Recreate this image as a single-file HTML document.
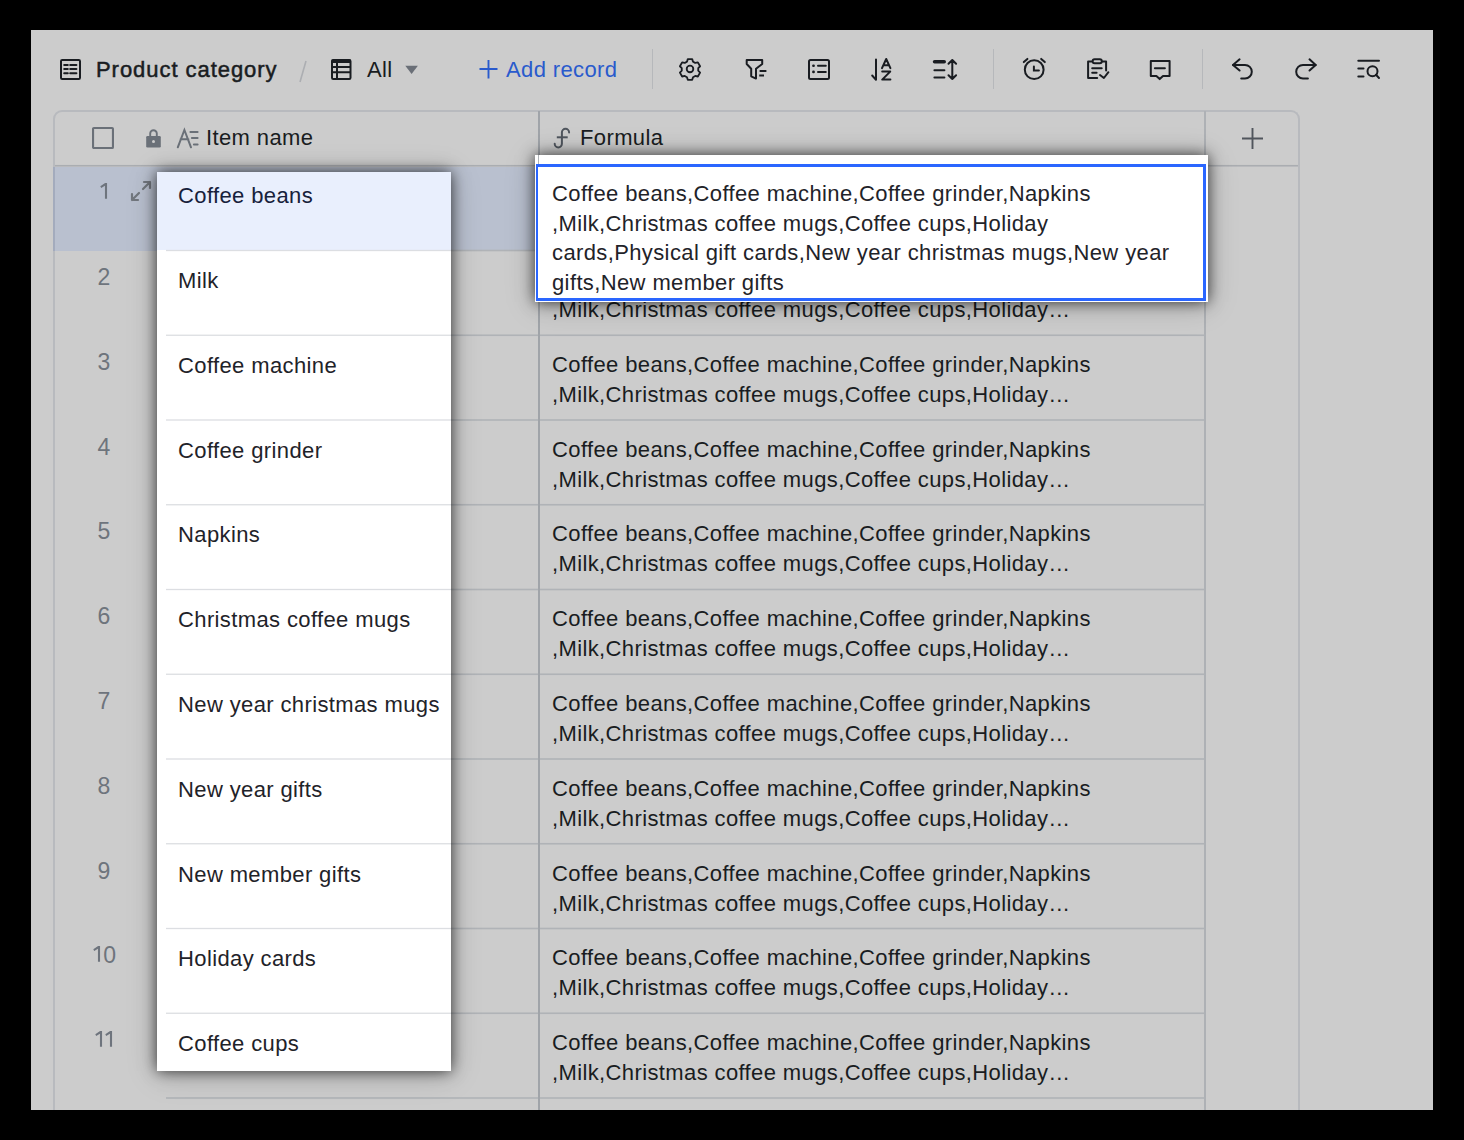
<!DOCTYPE html><html><head><meta charset="utf-8"><style>
*{margin:0;padding:0;box-sizing:border-box}
html,body{width:1464px;height:1140px;background:#000;overflow:hidden}
body{position:relative;font-family:"Liberation Sans",sans-serif;color:#191c21}
.abs{position:absolute}
#panel{position:absolute;left:31px;top:30px;width:1402px;height:1080px;background:#cccccc;overflow:hidden}
.t{position:absolute;white-space:nowrap;font-size:22px;letter-spacing:0.38px;line-height:30px}
.sep{position:absolute;top:49px;width:1px;height:40px;background:#b6b8bb}
.hl{position:absolute;height:2px;background:#babcc0}
.vl{position:absolute;width:1px;background:#aeb0b4}
.num{position:absolute;font-size:23px;color:#6e747c;line-height:30px;width:40px;text-align:center}
svg{position:absolute;overflow:visible}
</style></head><body>
<div id="panel"></div>
<svg style="left:60px;top:59px" width="21" height="21" viewBox="0 0 21 21" fill="none" stroke="#191c21" stroke-width="2"><rect x="1" y="1" width="19" height="19" rx="1.2"/><path d="M4.2 6h3.6M10.2 6h6.2M4.2 10.1h3.6M10.2 10.1h6.2M4.2 14.3h3.6M10.2 14.3h6.2" stroke-width="2" stroke-linecap="round"/></svg>
<div class="t" style="left:96px;top:55px;-webkit-text-stroke:0.5px #191c21;letter-spacing:0.95px">Product category</div>
<svg style="left:299px;top:60px" width="8" height="23" viewBox="0 0 8 23"><path d="M7 1L1 22" stroke="#acaeb2" stroke-width="1.6"/></svg>
<svg style="left:331px;top:59px" width="21" height="21" viewBox="0 0 21 21" fill="none" stroke="#191c21" stroke-width="2"><rect x="1" y="1" width="18.5" height="19" rx="1.2"/><rect x="0.5" y="0.5" width="19.5" height="3.6" rx="1" fill="#191c21" stroke="none"/><path d="M1 8h18.5M1 13.2h18.5M6 3v17"/></svg>
<div class="t" style="left:367px;top:55px">All</div>
<svg style="left:405px;top:65px" width="14" height="10" viewBox="0 0 14 10"><path d="M0.3 0.7h12.6L6.6 8.9z" fill="#6a6f77"/></svg>
<svg style="left:479px;top:59px" width="20" height="20" viewBox="0 0 20 20" stroke="#295acc" stroke-width="1.9"><path d="M9.5 1v18.5M0.5 10h18"/></svg>
<div class="t" style="left:506px;top:55px;color:#295acc">Add record</div>
<div class="sep" style="left:652px"></div>
<div class="sep" style="left:993px"></div>
<div class="sep" style="left:1202px"></div>
<svg style="left:679px;top:58px" width="22" height="22" viewBox="0 0 24 24" fill="none" stroke="#191c21" stroke-width="2" stroke-linejoin="round"><path d="M9.6 2.2h4.8l.9 2.8 2.4 1.4 2.9-.6 2.4 4.2-2 2.1v2.8l2 2.1-2.4 4.2-2.9-.6-2.4 1.4-.9 2.8H9.6l-.9-2.8-2.4-1.4-2.9.6-2.4-4.2 2-2.1v-2.8l-2-2.1 2.4-4.2 2.9.6 2.4-1.4z" transform="translate(0,-1)"/><circle cx="12" cy="11.9" r="3.6"/></svg>
<svg style="left:745px;top:59px" width="22" height="21" viewBox="0 0 22 21" fill="none" stroke="#191c21" stroke-width="2" stroke-linejoin="round"><path d="M1.7 1H17.2V5L11 9.8V19.6L6.2 17.3V9.8L1.7 5Z"/><path d="M14.6 12h6.8M14.2 16.5h4.8"/></svg>
<svg style="left:808px;top:59px" width="22" height="21" viewBox="0 0 22 21" fill="none" stroke="#191c21" stroke-width="2" stroke-linecap="round"><rect x="1" y="1" width="20" height="19" rx="1.5"/><path d="M5.4 6.8h0.2M5.4 12.9h0.2" stroke-width="2.6"/><path d="M10 6.8h7.8M10 12.9h7.8"/></svg>
<svg style="left:870px;top:58px" width="24" height="23" viewBox="0 0 24 23" fill="none" stroke="#191c21" stroke-width="2" stroke-linejoin="round" stroke-linecap="round"><path d="M6 1.6v20.2L2.2 17.5"/><path d="M12 10.2l4.2-9.2 4.2 9.2M13.3 7.3h5.8"/><path d="M12.2 13.6h8l-8 8h8.2"/></svg>
<svg style="left:933px;top:58px" width="25" height="23" viewBox="0 0 25 23" fill="none" stroke="#191c21" stroke-width="2" stroke-linecap="round"><path d="M1.6 3.8h9.6" stroke-width="3.6"/><path d="M1.4 12.2h10M1.4 19.5h10"/><path d="M19.3 2v19M15.5 5.8l3.8-3.8 3.8 3.8M15.5 17.2l3.8 3.8 3.8-3.8" stroke-linejoin="round"/></svg>
<svg style="left:1023px;top:57px" width="23" height="24" viewBox="0 0 23 24" fill="none" stroke="#191c21" stroke-width="2" stroke-linecap="round"><circle cx="11.2" cy="12.7" r="9.4"/><path d="M10.9 9.6v3.9h5"/><path d="M0.8 5.1l3.6-3.2M21.8 5.1l-3.6-3.2"/></svg>
<svg style="left:1086px;top:57px" width="24" height="23" viewBox="0 0 24 23" fill="none" stroke="#191c21" stroke-width="2" stroke-linejoin="round" stroke-linecap="round"><path d="M5.5 4.4H2.1V20.9h9.1M16.5 4.4h3.6v9.1"/><rect x="6.6" y="2.2" width="9.2" height="4" rx="2"/><path d="M6.2 11.2h9.5M6.2 15.7h4.4M14 18l3.9 3 4.5-5.8"/></svg>
<svg style="left:1149px;top:59px" width="22" height="22" viewBox="0 0 22 22" fill="none" stroke="#191c21" stroke-width="2" stroke-linejoin="round"><path d="M1.8 2h18.8v15H14l-3.3 3.1-3.3-3.1H1.8z"/><path d="M5.9 9.2h10" stroke-linecap="round"/></svg>
<svg style="left:1232px;top:58px" width="22" height="23" viewBox="0 0 22 23" fill="none" stroke="#191c21" stroke-width="2" stroke-linecap="round" stroke-linejoin="round"><path d="M7.6 1.3L1 6.9l6.6 5.6"/><path d="M1 6.9h12a6.8 6.8 0 0 1 0 13.6H9.2"/></svg>
<svg style="left:1295px;top:58px" width="22" height="23" viewBox="0 0 22 23" fill="none" stroke="#191c21" stroke-width="2" stroke-linecap="round" stroke-linejoin="round"><path d="M14.5 1.3l6.2 5.6-6.2 5.6"/><path d="M20.7 6.9H8a6.8 6.8 0 0 0 0 13.6h4.9"/></svg>
<svg style="left:1357px;top:58px" width="24" height="23" viewBox="0 0 24 23" fill="none" stroke="#191c21" stroke-width="2" stroke-linecap="round"><path d="M1.3 2.7H22M1.3 10.6h5.2M1.3 18.4h5.2"/><circle cx="15.5" cy="13.2" r="5"/><path d="M19 16.8l3 3.2"/></svg>
<div class="abs" style="left:53px;top:110px;width:1247px;height:1000px;border:2px solid #b8babe;border-bottom:none;border-radius:9px 9px 0 0"></div>
<div class="abs" style="left:53px;top:167px;width:1151px;height:84px;background:#b9c0cf"></div>
<div class="abs" style="left:53px;top:167px;width:2px;height:84px;background:#a3abbd"></div>
<svg style="left:0;top:0" width="1464" height="1110" viewBox="0 0 1464 1110"><rect x="55" y="164.95" width="1243" height="1.6" fill="#aaadb1"/><rect x="166" y="249.70" width="1039" height="1.6" fill="#b0b3b7"/><rect x="166" y="334.45" width="1039" height="1.6" fill="#b0b3b7"/><rect x="166" y="419.20" width="1039" height="1.6" fill="#b0b3b7"/><rect x="166" y="503.95" width="1039" height="1.6" fill="#b0b3b7"/><rect x="166" y="588.70" width="1039" height="1.6" fill="#b0b3b7"/><rect x="166" y="673.45" width="1039" height="1.6" fill="#b0b3b7"/><rect x="166" y="758.20" width="1039" height="1.6" fill="#b0b3b7"/><rect x="166" y="842.95" width="1039" height="1.6" fill="#b0b3b7"/><rect x="166" y="927.70" width="1039" height="1.6" fill="#b0b3b7"/><rect x="166" y="1012.45" width="1039" height="1.6" fill="#b0b3b7"/><rect x="166" y="1097.20" width="1039" height="1.6" fill="#b0b3b7"/></svg>
<div class="vl" style="left:538px;top:111px;height:999px;width:2px;background:#a0a4a9"></div>
<div class="vl" style="left:1204px;top:111px;height:999px;width:2px;background:#aeb1b5"></div>
<svg style="left:92px;top:127px" width="22" height="22" viewBox="0 0 22 22" fill="none" stroke="#6a7078" stroke-width="2.1"><rect x="1.05" y="1.05" width="19.9" height="19.9" rx="0.8"/></svg>
<svg style="left:146px;top:129px" width="15" height="19" viewBox="0 0 15 19"><path d="M4.2 8V4.6a3.3 3.3 0 0 1 6.6 0V8" fill="none" stroke="#6a7078" stroke-width="1.9"/><rect x="0.2" y="7" width="14.6" height="11.5" rx="1.3" fill="#6a7078"/><circle cx="7.5" cy="12.5" r="1.5" fill="#cccccc"/></svg>
<svg style="left:177px;top:129px" width="22" height="20" viewBox="0 0 22 20" fill="none" stroke="#6a7078" stroke-width="2" stroke-linecap="round"><path d="M0.8 18.3L7.4 1 14 18.3M3.6 10.2h7.8"/><path d="M13.4 2.9h7.2M14.9 9h5.7M16.9 15.4h3.7"/></svg>
<div class="t" style="left:206px;top:123px">Item name</div>
<svg style="left:553px;top:128px" width="18" height="21" viewBox="0 0 18 21" fill="none" stroke="#50565e" stroke-width="2" stroke-linecap="round"><path d="M16.1 4.4A3.6 3.6 0 0 0 8.9 4.4V15.8A3.6 3.6 0 0 1 1.7 15.8"/><path d="M3.8 9.3H14.7" stroke-linecap="butt"/></svg>
<div class="t" style="left:580px;top:123px">Formula</div>
<svg style="left:1242px;top:128px" width="21" height="21" viewBox="0 0 21 21" stroke="#50555c" stroke-width="1.9"><path d="M10.5 0v21M0 10.5h21"/></svg>
<svg style="left:100.1px;top:183px" width="8" height="17" viewBox="-6 0 8 17"><polygon points="1.05,0 -0.9,0 -5.7,3.3 -4.8,5.1 -1.05,2.7 -1.05,15.8 1.05,15.8" fill="#6e747d"/></svg>
<div class="num" style="left:84px;top:262px">2</div>
<div class="num" style="left:84px;top:347px">3</div>
<div class="num" style="left:84px;top:432px">4</div>
<div class="num" style="left:84px;top:516px">5</div>
<div class="num" style="left:84px;top:601px">6</div>
<div class="num" style="left:84px;top:686px">7</div>
<div class="num" style="left:84px;top:771px">8</div>
<div class="num" style="left:84px;top:856px">9</div>
<svg style="left:93.1px;top:946px" width="8" height="17" viewBox="-6 0 8 17"><polygon points="1.05,0 -0.9,0 -5.7,3.3 -4.8,5.1 -1.05,2.7 -1.05,15.8 1.05,15.8" fill="#6e747d"/></svg>
<div class="num" style="left:103.2px;top:940px;width:auto;text-align:left">0</div>
<svg style="left:95.2px;top:1031px" width="8" height="17" viewBox="-6 0 8 17"><polygon points="1.05,0 -0.9,0 -5.7,3.3 -4.8,5.1 -1.05,2.7 -1.05,15.8 1.05,15.8" fill="#6e747d"/></svg>
<svg style="left:105px;top:1031px" width="8" height="17" viewBox="-6 0 8 17"><polygon points="1.05,0 -0.9,0 -5.7,3.3 -4.8,5.1 -1.05,2.7 -1.05,15.8 1.05,15.8" fill="#6e747d"/></svg>
<svg style="left:130px;top:180px" width="22" height="22" viewBox="0 0 22 22" fill="none" stroke="#72777e" stroke-width="2.2" stroke-linecap="round" stroke-linejoin="round"><path d="M13 9L20 2M14 2h6v6M9 13l-7 7M2 14v6h6"/></svg>
<div class="t" style="left:552px;top:265px">Coffee beans,Coffee machine,Coffee grinder,Napkins<br>,Milk,Christmas coffee mugs,Coffee cups,Holiday<span style="letter-spacing:0.75px;margin-left:1px">...</span></div>
<div class="t" style="left:552px;top:350px">Coffee beans,Coffee machine,Coffee grinder,Napkins<br>,Milk,Christmas coffee mugs,Coffee cups,Holiday<span style="letter-spacing:0.75px;margin-left:1px">...</span></div>
<div class="t" style="left:552px;top:435px">Coffee beans,Coffee machine,Coffee grinder,Napkins<br>,Milk,Christmas coffee mugs,Coffee cups,Holiday<span style="letter-spacing:0.75px;margin-left:1px">...</span></div>
<div class="t" style="left:552px;top:519px">Coffee beans,Coffee machine,Coffee grinder,Napkins<br>,Milk,Christmas coffee mugs,Coffee cups,Holiday<span style="letter-spacing:0.75px;margin-left:1px">...</span></div>
<div class="t" style="left:552px;top:604px">Coffee beans,Coffee machine,Coffee grinder,Napkins<br>,Milk,Christmas coffee mugs,Coffee cups,Holiday<span style="letter-spacing:0.75px;margin-left:1px">...</span></div>
<div class="t" style="left:552px;top:689px">Coffee beans,Coffee machine,Coffee grinder,Napkins<br>,Milk,Christmas coffee mugs,Coffee cups,Holiday<span style="letter-spacing:0.75px;margin-left:1px">...</span></div>
<div class="t" style="left:552px;top:774px">Coffee beans,Coffee machine,Coffee grinder,Napkins<br>,Milk,Christmas coffee mugs,Coffee cups,Holiday<span style="letter-spacing:0.75px;margin-left:1px">...</span></div>
<div class="t" style="left:552px;top:859px">Coffee beans,Coffee machine,Coffee grinder,Napkins<br>,Milk,Christmas coffee mugs,Coffee cups,Holiday<span style="letter-spacing:0.75px;margin-left:1px">...</span></div>
<div class="t" style="left:552px;top:943px">Coffee beans,Coffee machine,Coffee grinder,Napkins<br>,Milk,Christmas coffee mugs,Coffee cups,Holiday<span style="letter-spacing:0.75px;margin-left:1px">...</span></div>
<div class="t" style="left:552px;top:1028px">Coffee beans,Coffee machine,Coffee grinder,Napkins<br>,Milk,Christmas coffee mugs,Coffee cups,Holiday<span style="letter-spacing:0.75px;margin-left:1px">...</span></div>
<div class="abs" style="left:157px;top:172px;width:294px;height:899px;background:#fff;box-shadow:0 0 14px rgba(0,0,0,0.72),0 3px 30px rgba(0,0,0,0.18)"></div>
<div class="abs" style="left:157px;top:172px;width:294px;height:78px;background:#e9effd"></div>
<svg style="left:0;top:0" width="1464" height="1110" viewBox="0 0 1464 1110"><rect x="166" y="249.85" width="285" height="1.3" fill="#dcdee2"/><rect x="166" y="334.60" width="285" height="1.3" fill="#dcdee2"/><rect x="166" y="419.35" width="285" height="1.3" fill="#dcdee2"/><rect x="166" y="504.10" width="285" height="1.3" fill="#dcdee2"/><rect x="166" y="588.85" width="285" height="1.3" fill="#dcdee2"/><rect x="166" y="673.60" width="285" height="1.3" fill="#dcdee2"/><rect x="166" y="758.35" width="285" height="1.3" fill="#dcdee2"/><rect x="166" y="843.10" width="285" height="1.3" fill="#dcdee2"/><rect x="166" y="927.85" width="285" height="1.3" fill="#dcdee2"/><rect x="166" y="1012.60" width="285" height="1.3" fill="#dcdee2"/></svg>
<div class="t" style="left:178px;top:181px;color:#17213b">Coffee beans</div>
<div class="t" style="left:178px;top:266px;color:#1f2329">Milk</div>
<div class="t" style="left:178px;top:351px;color:#1f2329">Coffee machine</div>
<div class="t" style="left:178px;top:436px;color:#1f2329">Coffee grinder</div>
<div class="t" style="left:178px;top:520px;color:#1f2329">Napkins</div>
<div class="t" style="left:178px;top:605px;color:#1f2329">Christmas coffee mugs</div>
<div class="t" style="left:178px;top:690px;color:#1f2329">New year christmas mugs</div>
<div class="t" style="left:178px;top:775px;color:#1f2329">New year gifts</div>
<div class="t" style="left:178px;top:860px;color:#1f2329">New member gifts</div>
<div class="t" style="left:178px;top:944px;color:#1f2329">Holiday cards</div>
<div class="t" style="left:178px;top:1029px;color:#1f2329">Coffee cups</div>
<div class="abs" style="left:535px;top:155px;width:673px;height:147px;background:#fff;box-shadow:0 0 14px rgba(0,0,0,0.72),0 3px 30px rgba(0,0,0,0.18)"></div>
<div class="abs" style="left:536px;top:164px;width:670px;height:137px;border:3px solid #2a66ff;border-left-width:2px"></div>
<div class="abs" style="left:538px;top:155px;width:1px;height:9px;background:#b0b4b8"></div>
<div class="t" style="left:552px;top:179px;line-height:29.6px;color:#1f2329">Coffee beans,Coffee machine,Coffee grinder,Napkins<br>,Milk,Christmas coffee mugs,Coffee cups,Holiday<br>cards,Physical gift cards,New year christmas mugs,New year<br>gifts,New member gifts</div>
</body></html>
